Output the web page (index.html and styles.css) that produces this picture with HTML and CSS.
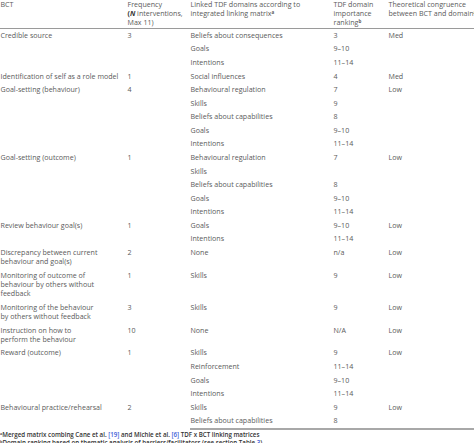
FILE: index.html
```html
<!DOCTYPE html>
<html>
<head>
<meta charset="utf-8">
<link rel="stylesheet" href="styles.css">
</head>
<body>
<table class="tbl">
<colgroup>
<col class="c1"><col class="c2"><col class="c3"><col class="c4"><col class="c5">
</colgroup>
<thead>
<tr>
<th>BCT</th>
<th>Frequency<br><b>(<i>N</i></b> interventions,<br>Max 11)</th>
<th>Linked TDF domains according to<br>integrated linking matrix<sup>a</sup></th>
<th>TDF domain<br>importance<br>ranking<sup>b</sup></th>
<th>Theoretical congruence<br>between BCT and domain<sup>a</sup></th>
</tr>
</thead>
<tbody>
<tr><td rowspan="3">Credible source</td><td rowspan="3">3</td><td>Beliefs about consequences</td><td>3</td><td>Med</td></tr>
<tr><td>Goals</td><td>9–10</td><td></td></tr>
<tr><td>Intentions</td><td>11–14</td><td></td></tr>
<tr><td>Identification of self as a role model</td><td>1</td><td>Social influences</td><td>4</td><td>Med</td></tr>
<tr><td rowspan="5">Goal-setting (behaviour)</td><td rowspan="5">4</td><td>Behavioural regulation</td><td>7</td><td>Low</td></tr>
<tr><td>Skills</td><td>9</td><td></td></tr>
<tr><td>Beliefs about capabilities</td><td>8</td><td></td></tr>
<tr><td>Goals</td><td>9–10</td><td></td></tr>
<tr><td>Intentions</td><td>11–14</td><td></td></tr>
<tr><td rowspan="5">Goal-setting (outcome)</td><td rowspan="5">1</td><td>Behavioural regulation</td><td>7</td><td>Low</td></tr>
<tr><td>Skills</td><td></td><td></td></tr>
<tr><td>Beliefs about capabilities</td><td>8</td><td></td></tr>
<tr><td>Goals</td><td>9–10</td><td></td></tr>
<tr><td>Intentions</td><td>11–14</td><td></td></tr>
<tr><td rowspan="2">Review behaviour goal(s)</td><td rowspan="2">1</td><td>Goals</td><td>9–10</td><td>Low</td></tr>
<tr><td>Intentions</td><td>11–14</td><td></td></tr>
<tr><td>Discrepancy between current<br>behaviour and goal(s)</td><td>2</td><td>None</td><td>n/a</td><td>Low</td></tr>
<tr><td>Monitoring of outcome of<br>behaviour by others without<br>feedback</td><td>1</td><td>Skills</td><td>9</td><td>Low</td></tr>
<tr><td>Monitoring of the behaviour<br>by others without feedback</td><td>3</td><td>Skills</td><td>9</td><td>Low</td></tr>
<tr><td>Instruction on how to<br>perform the behaviour</td><td>10</td><td>None</td><td>N/A</td><td>Low</td></tr>
<tr><td rowspan="4">Reward (outcome)</td><td rowspan="4">1</td><td>Skills</td><td>9</td><td>Low</td></tr>
<tr><td>Reinforcement</td><td>11–14</td><td></td></tr>
<tr><td>Goals</td><td>9–10</td><td></td></tr>
<tr><td>Intentions</td><td>11–14</td><td></td></tr>
<tr><td rowspan="2">Behavioural practice/rehearsal</td><td rowspan="2">2</td><td>Skills</td><td>9</td><td>Low</td></tr>
<tr><td>Beliefs about capabilities</td><td>8</td><td></td></tr>
</tbody>
</table>
<div class="notes">
<p><sup>a</sup>Merged matrix combing Cane et al. <span class="ref">[19]</span> and Michie et al. <span class="ref">[6]</span> TDF x BCT linking matrices</p>
<p><sup>b</sup>Domain ranking based on thematic analysis of barriers/facilitators (see section Table <span class="ref">3</span>)</p>
</div>
</body>
</html>
```
FILE: styles.css
```css
html, body {
  margin: 0;
  padding: 0;
  background: #fff;
}
body {
  width: 474px;
  height: 443px;
  overflow: hidden;
  font-family: "Open Sans", "Noto Sans", sans-serif;
  color: #5a5a5a;
}
.tbl {
  width: 474px;
  border-collapse: collapse;
  table-layout: fixed;
  font-size: 7.1px;
  line-height: 9.2px;
}
.c1 { width: 127px; }
.c2 { width: 63px; }
.c3 { width: 143px; }
.c4 { width: 55px; }
.c5 { width: 86px; }
.tbl th {
  font-weight: normal;
  text-align: left;
  vertical-align: top;
  padding: 0 0 0 0.5px;
  white-space: nowrap;
  border-bottom: 1.5px solid #9a9a9a;
}
.tbl th b {
  font-weight: 700;
  color: #333;
}
.tbl sup {
  font-size: 4.5px;
  line-height: 0;
  font-weight: 700;
  vertical-align: 2.5px;
}
.tbl td {
  vertical-align: top;
  padding: 2.2px 0 2.2px 0.5px;
  white-space: nowrap;
}
.tbl tbody tr:last-child td {
  border-bottom: 2px solid #a8a8a8;
}
.notes {
  font-size: 6.2px;
  line-height: 7.5px;
  font-weight: 600;
  color: #333;
  padding-top: 1.5px;
}
.notes p {
  margin: 0;
  white-space: nowrap;
}
.notes sup {
  font-size: 4px;
  line-height: 0;
  vertical-align: 2.5px;
}
.ref {
  color: #3b5bd6;
}
```
